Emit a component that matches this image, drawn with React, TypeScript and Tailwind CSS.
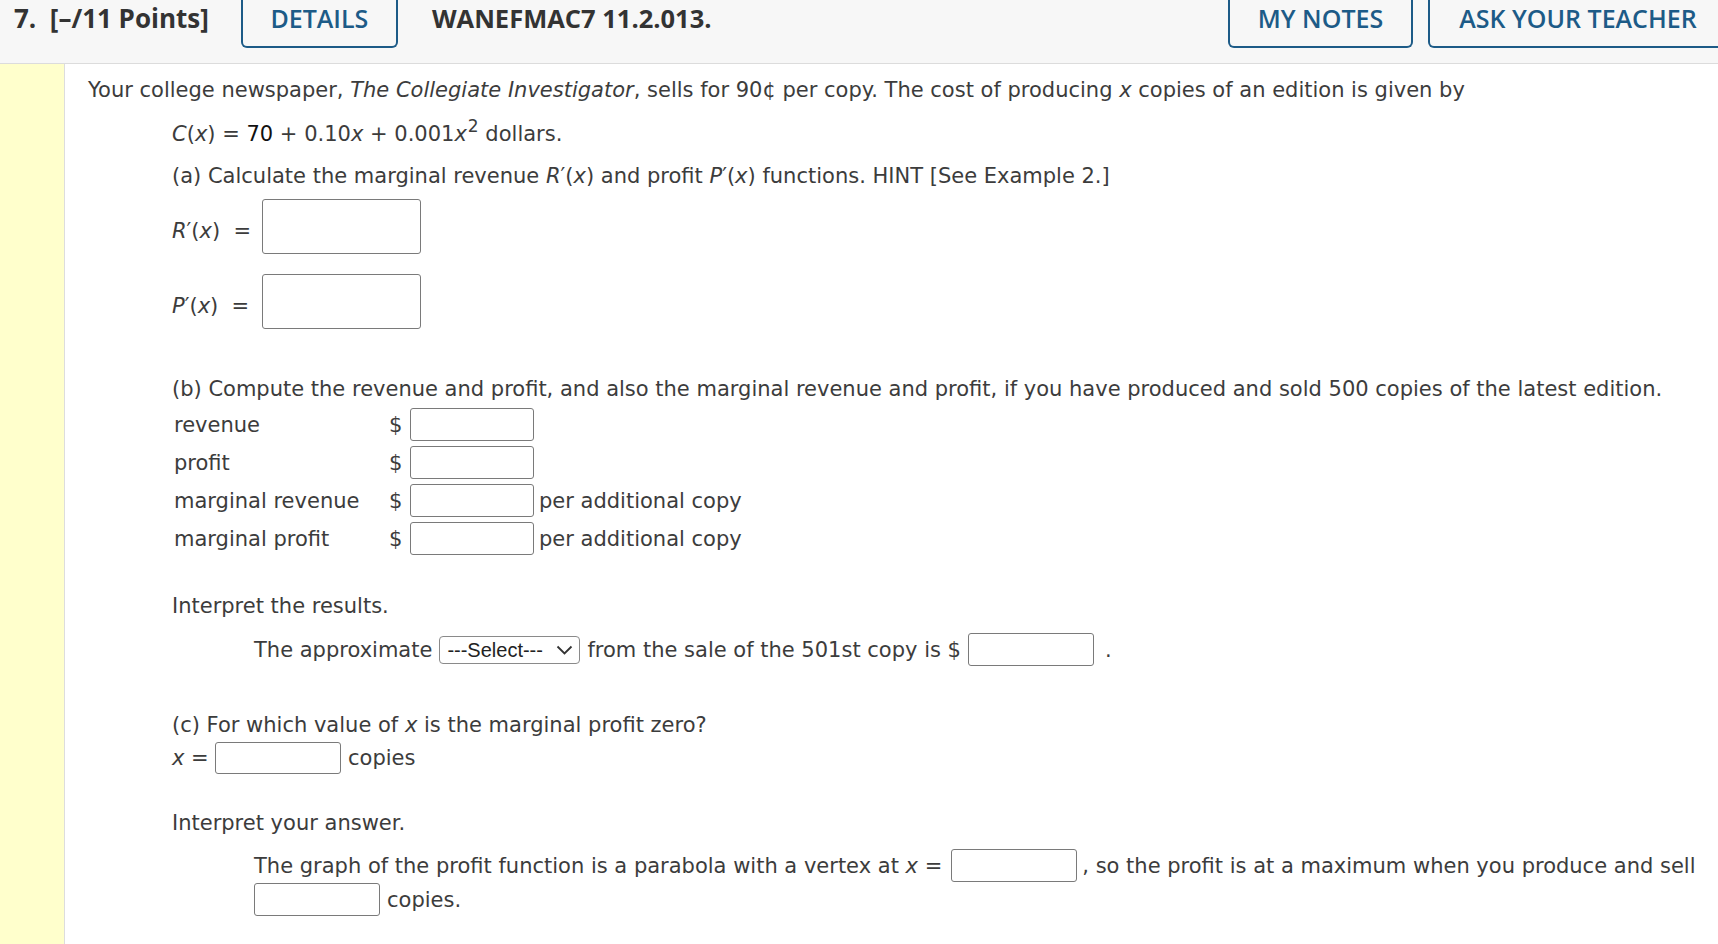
import React from "react";

const body = { fontFamily: '"DejaVu Sans", Verdana, sans-serif' };

const Box = ({ className = "" }: { className?: string }) => (
  <span className={`inline-block shrink-0 border border-[#7a7a7a] rounded-[3px] bg-white ${className}`} />
);

const I = ({ children }: { children: React.ReactNode }) => <i className="italic">{children}</i>;

const HeaderButton = ({ label, className = "" }: { label: string; className?: string }) => (
  <div
    className={`shrink-0 h-[48px] pb-[11px] border-2 border-t-0 border-[#1d5b87] rounded-b-[6px] flex items-center justify-center text-[#1d5b87] text-[25px] leading-[34px] font-semibold ${className}`}
  >
    {label}
  </div>
);

const Row = ({ label, note }: { label: string; note?: string }) => (
  <div className="flex items-center h-[33px]">
    <span className="w-[217px] shrink-0 pl-[2px]">{label}</span>
    <span className="w-[21px] shrink-0">$</span>
    <Box className="w-[124px] h-[33px]" />
    {note && <span className="ml-[5px]">{note}</span>}
  </div>
);

export default function App() {
  return (
    <div className="w-full min-h-screen bg-white overflow-hidden text-[#3c3c3c]" style={body}>
      {/* question header */}
      <div
        className="flex items-start h-[64px] bg-[#f7f7f7] border-b border-[#dcdcdc] overflow-hidden"
        style={{ fontFamily: '"Open Sans", sans-serif' }}
      >
        <div className="shrink-0 h-[36px] flex items-center pl-[14px] text-[26px] font-bold text-[#333]">
          7.&nbsp; [–/11 Points]
        </div>
        <HeaderButton label="DETAILS" className="ml-[32px] w-[157px]" />
        <div className="shrink-0 h-[36px] flex items-center ml-[34px] text-[25.5px] font-bold text-[#333]">
          WANEFMAC7 11.2.013.
        </div>
        <div className="flex-1" />
        <HeaderButton label="MY NOTES" className="w-[185px]" />
        <HeaderButton label="ASK YOUR TEACHER" className="ml-[15px] w-[300px] -mr-[10px]" />
      </div>

      <div className="flex min-h-[880px]">
        <div className="w-[65px] shrink-0 bg-[#ffffcc] border-r border-[#dddddd]" />

        <div className="flex-1 pl-[23px] text-[21px] leading-[26px]">
          <p className="mt-[13px]">
            Your college newspaper, <I>The Collegiate Investigator</I>, sells for 90¢ per copy. The cost of producing{" "}
            <I>x</I> copies of an edition is given by
          </p>
          <p className="mt-[18px] ml-[84px]">
            <I>C</I>(<I>x</I>) = <span className="text-[#111]">70</span> + 0.10<I>x</I> + 0.001<I>x</I>
            <sup className="text-[17px] -top-[9px] ml-[1px]">2</sup> dollars.
          </p>
          <p className="mt-[16px] ml-[84px]">
            (a) Calculate the marginal revenue <I>R</I>′(<I>x</I>) and profit <I>P</I>′(<I>x</I>) functions. HINT [See
            Example 2.]
          </p>

          <div className="ml-[84px] mt-[10px] flex items-center">
            <span className="w-[90px] shrink-0 pt-[8px]">
              <I>R</I>′(<I>x</I>)&nbsp; =
            </span>
            <Box className="w-[159px] h-[55px]" />
          </div>
          <div className="ml-[84px] mt-[20px] flex items-center">
            <span className="w-[90px] shrink-0 pt-[8px]">
              <I>P</I>′(<I>x</I>)&nbsp; =
            </span>
            <Box className="w-[159px] h-[55px]" />
          </div>

          <p className="mt-[47px] ml-[84px]">
            (b) Compute the revenue and profit, and also the marginal revenue and profit, if you have produced and sold
            500 copies of the latest edition.
          </p>
          <div className="ml-[84px] mt-[6px] flex flex-col gap-[5px]">
            <Row label="revenue" />
            <Row label="profit" />
            <Row label="marginal revenue" note="per additional copy" />
            <Row label="marginal profit" note="per additional copy" />
          </div>

          <p className="mt-[38px] ml-[84px]">Interpret the results.</p>
          <div className="mt-[14px] ml-[166px] flex items-center h-[33px]">
            <span>The approximate</span>
            <span
              className="ml-[7px] w-[141px] h-[28px] shrink-0 border border-[#8a8a8a] rounded-[4px] flex items-center justify-between pl-[7px] pr-[6px] text-[#222] text-[20px]"
              style={{ fontFamily: '"Liberation Sans", Arial, sans-serif' }}
            >
              ---Select---
              <svg width="17" height="10" viewBox="0 0 17 10" fill="none">
                <path d="M1.5 1.5 8.5 8.5l7-7" stroke="#333" strokeWidth="1.8" />
              </svg>
            </span>
            <span className="ml-[7px]">from the sale of the 501st copy is $</span>
            <Box className="ml-[7px] w-[126px] h-[33px]" />
            <span className="ml-[11px]">.</span>
          </div>

          <p className="mt-[46px] ml-[84px]">
            (c) For which value of <I>x</I> is the marginal profit zero?
          </p>
          <div className="mt-[4px] ml-[84px] flex items-center h-[32px]">
            <span className="w-[43px] shrink-0">
              <I>x</I> =
            </span>
            <Box className="w-[126px] h-[32px]" />
            <span className="ml-[7px]">copies</span>
          </div>

          <p className="mt-[36px] ml-[84px]">Interpret your answer.</p>
          <div className="mt-[13px] ml-[166px] flex items-center h-[33px] whitespace-nowrap">
            <span>
              The graph of the profit function is a parabola with a vertex at <I>x</I> =
            </span>
            <Box className="ml-[9px] w-[126px] h-[33px]" />
            <span className="ml-[5px]">, so the profit is at a maximum when you produce and sell</span>
          </div>
          <div className="mt-[1px] ml-[166px] flex items-center h-[33px]">
            <Box className="w-[126px] h-[33px]" />
            <span className="ml-[7px]">copies.</span>
          </div>
        </div>
      </div>
    </div>
  );
}
